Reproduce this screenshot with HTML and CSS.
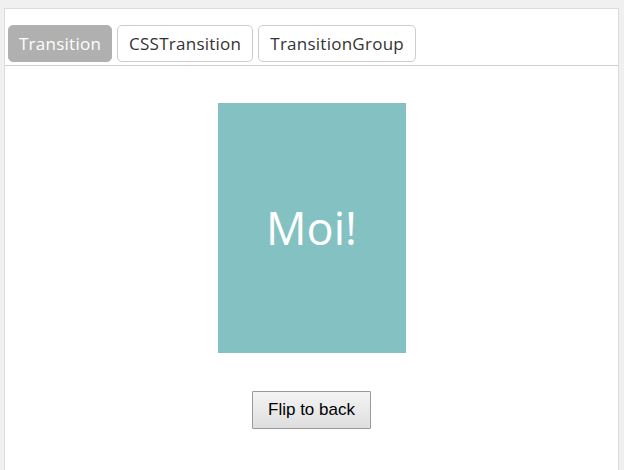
FILE: index.html
```html
<!DOCTYPE html>
<html lang="en">

<head>
    <meta charset="UTF-8">
    <meta name="viewport" content="width=device-width, initial-scale=1.0">
    <title>transitions</title>
    <link rel="stylesheet" href="styles.css">
</head>

<body>
    <div class="panel">
        <div class="tabs">
            <button class="tab active">Transition</button>
            <button class="tab">CSSTransition</button>
            <button class="tab">TransitionGroup</button>
        </div>
        <div class="stage">
            <div class="card">Moi!</div>
            <button class="flip">Flip to back</button>
        </div>
    </div>
</body>

</html>
```

FILE: styles.css
```css
*{
    margin: 0;
    padding: 0;
    box-sizing: border-box;
}
body{
    background-color: #f0f0f0;
    font-family: "Open Sans", "Liberation Sans", sans-serif;
}
.panel{
    margin: 8px 5px 0px 4px;
    height: 480px;
    background-color: #fff;
    border: 1px solid #dcdcdc;
}
.tabs{
    display: flex;
    gap: 5px;
    padding: 16px 3px 3px 3px;
    border-bottom: 1px solid #cfcfcf;
}
.tab{
    height: 37px;
    padding: 0px 11px 1px 11px;
    border: 1px solid #cccccc;
    border-radius: 5px;
    background-color: #fff;
    color: #333;
    font-family: "Open Sans", sans-serif;
    font-size: 17px;
    letter-spacing: 0.25px;
}
.tab.active{
    padding: 0px 10px 1px 10px;
    background-color: #b0b0b0;
    border-color: #b0b0b0;
    color: #fff;
}
.stage{
    display: flex;
    flex-direction: column;
    align-items: center;
    padding-top: 37px;
}
.card{
    width: 188px;
    height: 250px;
    background-color: #84c1c2;
    color: #fff;
    display: flex;
    align-items: center;
    justify-content: center;
    font-family: "Open Sans", sans-serif;
    font-size: 45px;
    padding-bottom: 2px;
}
.flip{
    margin-top: 38px;
    height: 38px;
    padding: 0px 15px;
    border: 1px solid #999;
    border-radius: 1px;
    background: linear-gradient(#f4f4f4, #dedede);
    color: #000;
    font-family: "Liberation Sans", Arial, sans-serif;
    font-size: 17px;
}
```
